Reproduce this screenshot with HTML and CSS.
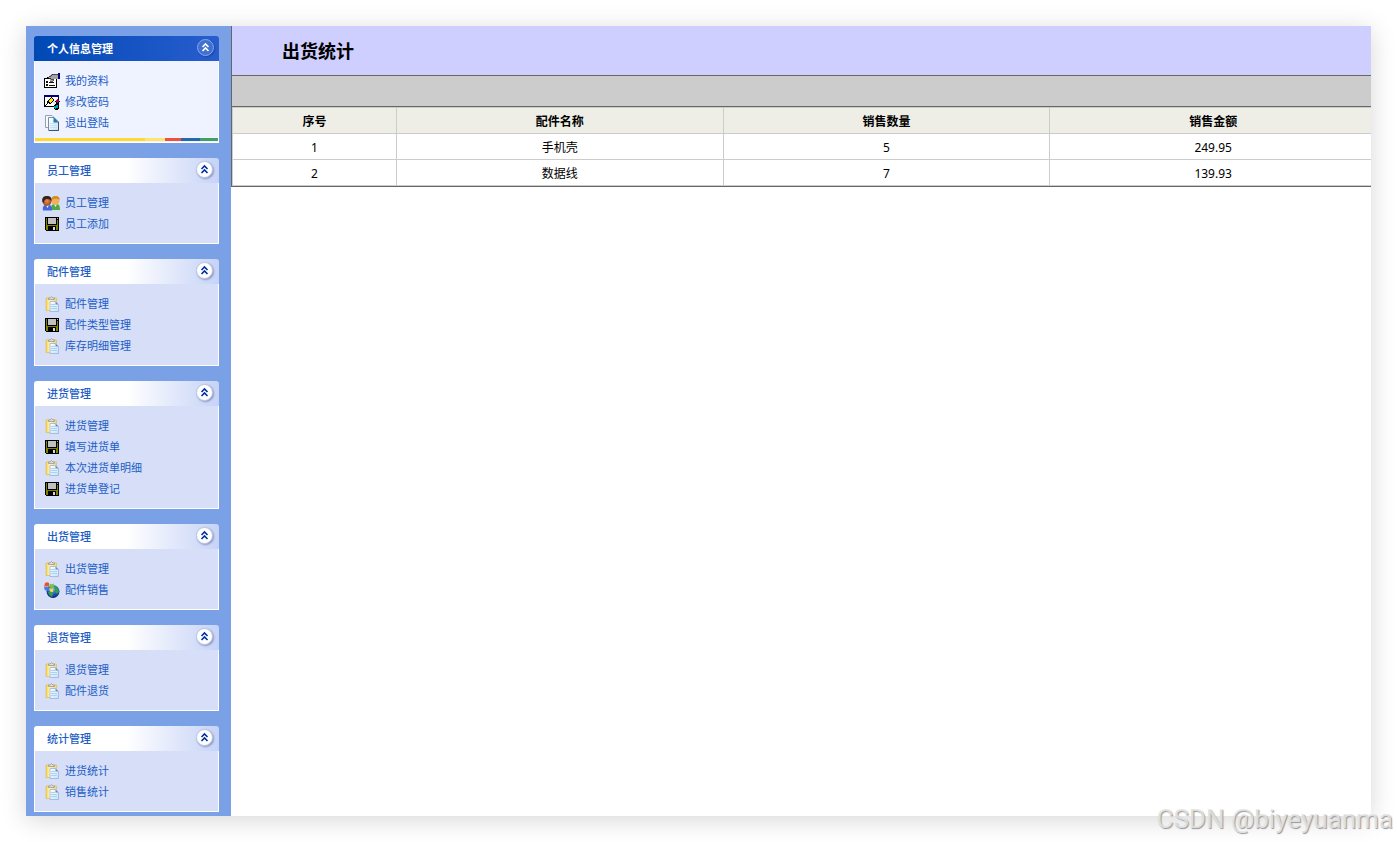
FILE: index.html
```html
<!DOCTYPE html>
<html lang="zh-CN">
<head>
<meta charset="utf-8">
<title>出货统计</title>
<link rel="stylesheet" href="styles.css">
</head>
<body>
<svg class="sprite" aria-hidden="true">
  <defs>
    <linearGradient id="board" x1="0" x2="1" y1="0" y2="0"><stop offset="0" stop-color="#f6cf50"/><stop offset=".35" stop-color="#fff6bd"/><stop offset="1" stop-color="#f0d583"/></linearGradient>
    <linearGradient id="sheet" x1="0" x2="1" y1="0" y2="1"><stop offset="0" stop-color="#ffffff"/><stop offset="1" stop-color="#c4e2fb"/></linearGradient>
    <radialGradient id="globe" cx=".5" cy=".3" r=".7"><stop offset="0" stop-color="#5bb8f5"/><stop offset=".6" stop-color="#1c55c4"/><stop offset="1" stop-color="#0a2470"/></radialGradient>
    <radialGradient id="skin" cx=".5" cy=".5" r=".6"><stop offset="0" stop-color="#f08a4c"/><stop offset="1" stop-color="#8a3c18"/></radialGradient>
  </defs>
  <symbol id="clipboard" viewBox="0 0 16 16">
    <path d="M2 2 H12.500 V14.500 H2 Z" fill="url(#board)" stroke="#dcbb58" stroke-width=".7"/>
    <path d="M4.500 3.500 V2 H6 Q7.500 -.8 9 2 H10.500 V3.500 Z" fill="#e2e2da" stroke="#98988c" stroke-width=".8"/>
    <path d="M6 5.500 H11.500 L14.500 8.500 V15.500 H6 Z" fill="url(#sheet)" stroke="#9bb2d4" stroke-width=".8"/>
    <path d="M11.500 5.500 V8.500 H14.500 Z" fill="#6f8cc0"/>
    <path d="M7 8.500 H11 M7 10.500 H13 M7 12.500 H13" stroke="#a6d2f7"/>
  </symbol>
  <symbol id="floppy" viewBox="0 0 16 16" shape-rendering="crispEdges">
    <path d="M1 1 H15 V15 H2 L1 14 Z" fill="#000"/>
    <path d="M2 2 H3 V9 H13 V4 H14 V14 H12 V10 H4 V14 H2 Z" fill="#808000"/>
    <path d="M4 2 H12 V8 H4 Z M13 2 H14 V3 H13 Z" fill="#c0c0c0"/>
    <path d="M4 10 H12 V14 H4 Z" fill="#000"/>
    <path d="M9 11 H11 V14 H9 Z" fill="#d8d8d8"/>
  </symbol>
  <symbol id="profile" viewBox="0 0 16 16" shape-rendering="crispEdges">
    <path d="M0 5 H3 V4 H13 V15 H0 Z" fill="#000"/>
    <path d="M1 6 H12 V14 H1 Z" fill="#fff"/>
    <path d="M4 4 L8 1 H14 V6 H10 L8 8 H6 L7 5 H4 Z" fill="#a5a5a5"/>
    <path d="M4 4 H5 V3 H7 V2 H8 V1 H14 M5 5 H7 M7 6 H9 V8 H6" fill="none" stroke="#333" stroke-width=".8"/>
    <path d="M14 0 H16 V6 H14 Z" fill="#000080"/>
    <path d="M2 8 H4 V10 H2 Z M2 11 H4 V13 H2 Z M5 9 H10 V10 H5 Z M5 12 H11 V13 H5 Z" fill="#111"/>
  </symbol>
  <symbol id="password" viewBox="0 0 16 16" shape-rendering="crispEdges">
    <path d="M0 1 H15 V13 H0 Z" fill="#000"/>
    <path d="M1 3 H14 V12 H1 Z" fill="#fff"/>
    <path d="M0 1 H15 V3 H0 Z" fill="#000080"/>
    <path d="M2 8 L7 3 L10 6 L6 10 Z" fill="#000"/>
    <path d="M4 7 L7 4 L9 6 L6 9 Z" fill="#ffe900"/>
    <path d="M10 8 L13 5 L16 7 L13 10 Z" fill="#000"/>
    <path d="M11 7 L13 5 L15 7 L13 9 Z" fill="#a80070"/>
    <path d="M8 8 L10 6 L12 9 L10 11 Z" fill="#e8e8e8"/>
    <path d="M9 12 L12 10 L15 11 V14 L13 16 H11 Z" fill="#000"/>
    <path d="M10 12 H12 V11 H14 V14 H12 V15 H11 Z" fill="#00a8a0"/>
    <path d="M1 12 L5 8" stroke="#000"/>
  </symbol>
  <symbol id="pages" viewBox="0 0 16 16">
    <path d="M1.500 .5 H8 L10.500 3 V12.500 H1.500 Z" fill="#f7fbff" stroke="#91a3b4"/>
    <path d="M4.500 2.500 H10 L14.500 7 V15.500 H4.500 Z" fill="url(#sheet)" stroke="#7890a6"/>
    <path d="M9.500 2 L15 7.500 H9.500 Z" fill="#217aaf"/>
    <path d="M6 8.500 H13 M6 10.500 H13 M6 12.500 H13" stroke="#c4dcf0" stroke-width=".8"/>
    <path d="M14.500 7 V15.500 H5" fill="none" stroke="#3e526b"/>
  </symbol>
  <symbol id="people" viewBox="0 0 18 16">
    <path d="M9 15 Q8.500 9 12 9 H15 Q18 9 18 15 Z" fill="#4daa44"/>
    <path d="M12 9 L13.500 12 L15 9 Z" fill="#fff"/>
    <ellipse cx="13.500" cy="5.500" rx="4" ry="4.600" fill="#f2b05c"/>
    <path d="M9.500 5 Q9 1 13.500 1 Q18 1 17.500 5 Q15 3 12 4 Z" fill="#d88b25"/>
    <path d="M1 15.500 Q0 10 4 10 H7 Q10 10 10 15.500 Z" fill="#4168e0"/>
    <path d="M4 10 L5.500 13 L7 10 Z" fill="#fff"/>
    <ellipse cx="5" cy="6" rx="4.500" ry="5" fill="url(#skin)"/>
    <path d="M.5 7 Q-1 1 5 1 Q10 1 9.500 6 Q8 3.500 4 4 Q2 5 1.500 8 Z" fill="#30251f"/>
  </symbol>
  <symbol id="globe-flag" viewBox="0 0 16 16">
    <circle cx="9" cy="9.500" r="6.500" fill="url(#globe)"/>
    <path d="M10 4 Q14.500 5 15 9 Q14 13 12 11 Q10 9 11 7 Z M4 10 Q9 9 9 12 L8 15 Q5 14 4 10 Z" fill="#35a044"/>
    <path d="M1 1 Q3 -.5 5 1 L5 5 Q3 3.500 0 5 Z" fill="#e4572c"/>
    <path d="M5.500 1.500 Q8 3 10 1.500 L9.500 6 Q7 6.500 5.500 5 Z" fill="#7fc242"/>
    <path d="M0 5.500 Q3 4 5 6 L5 9 Q3 8 1 8.500 Z" fill="#447be0"/>
    <path d="M5.500 6 Q7 7 9.500 6.500 L9 10 Q7 10.500 5.500 9 Z" fill="#ffd83d"/>
  </symbol>
  <symbol id="chevrons" viewBox="0 0 15 15">
    <path d="M4.500 7 L7.500 4 L10.500 7 M4.500 11 L7.500 8 L10.500 11" fill="none" stroke="currentColor" stroke-width="1.600"/>
  </symbol>
</svg>

<div class="window">
  <nav class="sidebar" aria-label="主菜单">
    <section class="panel panel-primary">
      <header class="panel-head"><h2>个人信息管理</h2><button class="toggle" type="button" aria-label="折叠个人信息管理"><svg><use href="#chevrons"/></svg></button></header>
      <ul class="menu">
        <li><a href="#"><svg><use href="#profile"/></svg>我的资料</a></li>
        <li><a href="#"><svg><use href="#password"/></svg>修改密码</a></li>
        <li><a href="#"><svg><use href="#pages"/></svg>退出登陆</a></li>
      </ul>
    </section>
    <section class="panel">
      <header class="panel-head"><h2>员工管理</h2><button class="toggle" type="button" aria-label="折叠员工管理"><svg><use href="#chevrons"/></svg></button></header>
      <ul class="menu">
        <li><a href="#"><svg class="wide"><use href="#people"/></svg>员工管理</a></li>
        <li><a href="#"><svg><use href="#floppy"/></svg>员工添加</a></li>
      </ul>
    </section>
    <section class="panel">
      <header class="panel-head"><h2>配件管理</h2><button class="toggle" type="button" aria-label="折叠配件管理"><svg><use href="#chevrons"/></svg></button></header>
      <ul class="menu">
        <li><a href="#"><svg><use href="#clipboard"/></svg>配件管理</a></li>
        <li><a href="#"><svg><use href="#floppy"/></svg>配件类型管理</a></li>
        <li><a href="#"><svg><use href="#clipboard"/></svg>库存明细管理</a></li>
      </ul>
    </section>
    <section class="panel">
      <header class="panel-head"><h2>进货管理</h2><button class="toggle" type="button" aria-label="折叠进货管理"><svg><use href="#chevrons"/></svg></button></header>
      <ul class="menu">
        <li><a href="#"><svg><use href="#clipboard"/></svg>进货管理</a></li>
        <li><a href="#"><svg><use href="#floppy"/></svg>填写进货单</a></li>
        <li><a href="#"><svg><use href="#clipboard"/></svg>本次进货单明细</a></li>
        <li><a href="#"><svg><use href="#floppy"/></svg>进货单登记</a></li>
      </ul>
    </section>
    <section class="panel">
      <header class="panel-head"><h2>出货管理</h2><button class="toggle" type="button" aria-label="折叠出货管理"><svg><use href="#chevrons"/></svg></button></header>
      <ul class="menu">
        <li><a href="#"><svg><use href="#clipboard"/></svg>出货管理</a></li>
        <li><a href="#"><svg><use href="#globe-flag"/></svg>配件销售</a></li>
      </ul>
    </section>
    <section class="panel">
      <header class="panel-head"><h2>退货管理</h2><button class="toggle" type="button" aria-label="折叠退货管理"><svg><use href="#chevrons"/></svg></button></header>
      <ul class="menu">
        <li><a href="#"><svg><use href="#clipboard"/></svg>退货管理</a></li>
        <li><a href="#"><svg><use href="#clipboard"/></svg>配件退货</a></li>
      </ul>
    </section>
    <section class="panel">
      <header class="panel-head"><h2>统计管理</h2><button class="toggle" type="button" aria-label="折叠统计管理"><svg><use href="#chevrons"/></svg></button></header>
      <ul class="menu">
        <li><a href="#"><svg><use href="#clipboard"/></svg>进货统计</a></li>
        <li><a href="#"><svg><use href="#clipboard"/></svg>销售统计</a></li>
      </ul>
    </section>
  </nav>

  <main class="main">
    <div class="report">
      <h1>出货统计</h1>
      <div class="toolbar"></div>
      <table class="data">
        <colgroup><col class="col-index"><col><col><col></colgroup>
        <thead><tr><th>序号</th><th>配件名称</th><th>销售数量</th><th>销售金额</th></tr></thead>
        <tbody>
          <tr><td>1</td><td>手机壳</td><td>5</td><td>249.95</td></tr>
          <tr><td>2</td><td>数据线</td><td>7</td><td>139.93</td></tr>
        </tbody>
      </table>
    </div>
  </main>
</div>
<div class="watermark">CSDN @biyeyuanma</div>
</body>
</html>
```

FILE: styles.css
```css
* { box-sizing: border-box; }

body {
  position: relative;
  margin: 0;
  padding: 26px;
  min-height: 100vh;
  background: #fff;
  color: #000;
  font: 12px/20px "Noto Sans", "Noto Sans CJK SC", sans-serif;
}

.sprite { position: absolute; width: 0; height: 0; }

.window {
  display: flex;
  background: #fff;
  box-shadow: 0 4px 24px rgba(0, 0, 0, .16);
}

.sidebar {
  display: flex;
  flex: none;
  flex-direction: column;
  gap: 15px;
  width: 205px;
  padding: 10px 12px 4px 8px;
  background: #7aa1e6;
  font-family: "Noto Sans CJK SC", sans-serif;
}

.panel-head {
  display: flex;
  align-items: center;
  justify-content: space-between;
  height: 25px;
  padding: 0 6px 0 13px;
  border-radius: 3px 3px 0 0;
  background: linear-gradient(90deg, #fff 50%, #c6d3f7);
  color: #215dc6;
}

.panel-head h2 {
  margin: 0;
  font-size: 11px;
  font-weight: 500;
  line-height: 25px;
}

.toggle {
  width: 17px;
  height: 17px;
  margin-bottom: 2px;
  padding: 0;
  border: 1px solid #b9c5e0;
  border-radius: 50%;
  background: #fff;
  box-shadow: 1px 1px 2px #8997bd;
  color: #00309c;
}

.toggle svg { display: block; width: 15px; height: 15px; }

.panel-primary .panel-head {
  padding-right: 5px;
  background: linear-gradient(90deg, #0049b5, #295dce);
  color: #fff;
}

.panel-primary h2 { font-weight: 700; }

.panel-primary .toggle {
  border-color: #86aaf0;
  background: #3f71d2;
  box-shadow: 1px 1px 2px #1b459c;
  color: #fff;
}

.menu {
  margin: 0;
  padding: 9px;
  border: solid #fff;
  border-width: 0 1px 1px;
  background: #d6dff7;
  list-style: none;
}

.panel-primary .menu {
  background: linear-gradient(90deg, #ffd92e 60%, #ffe36a 60% 71%, #f0513c 71% 80%, #2867ad 80% 90%, #43a065 90%) 0 calc(100% - 1px) / 100% 3px no-repeat, #eff3ff;
}

.menu a {
  display: flex;
  gap: 5px;
  height: 21px;
  color: #215dc6;
  font-size: 11px;
  line-height: 21px;
  text-decoration: none;
}

.menu svg {
  flex: none;
  align-self: center;
  width: 16px;
  height: 16px;
}

.menu .wide { width: 18px; margin-left: -2px; }

.main {
  flex: 1;
  min-width: 0;
  overflow: hidden;
}

.report {
  border: solid #666;
  border-width: 0 0 1px 1px;
}

h1 {
  margin: 0;
  padding: 2px 50px 0;
  border-bottom: 1px solid #666;
  background: #ceceff;
  font-size: 18px;
  line-height: 47px;
}

.toolbar {
  height: 31px;
  border-bottom: 1px solid #666;
  background: #ccc;
}

/* The grid runs slightly past the frame, which clips its right edge. */
.data {
  width: calc(100% + 6px);
  border-collapse: collapse;
  table-layout: fixed;
  text-align: center;
}

.col-index { width: 164px; }

.data th,
.data td {
  height: 26px;
  padding: 2px 0 0;
  border: 1px solid #ccc;
}

.data th { background: #eeeee6; }

.watermark {
  position: absolute;
  right: 4px;
  bottom: 8px;
  color: rgba(228, 228, 228, .9);
  font: 400 26px/30px Roboto, sans-serif;
  text-shadow: 1px 1px 1px #999;
}
```
